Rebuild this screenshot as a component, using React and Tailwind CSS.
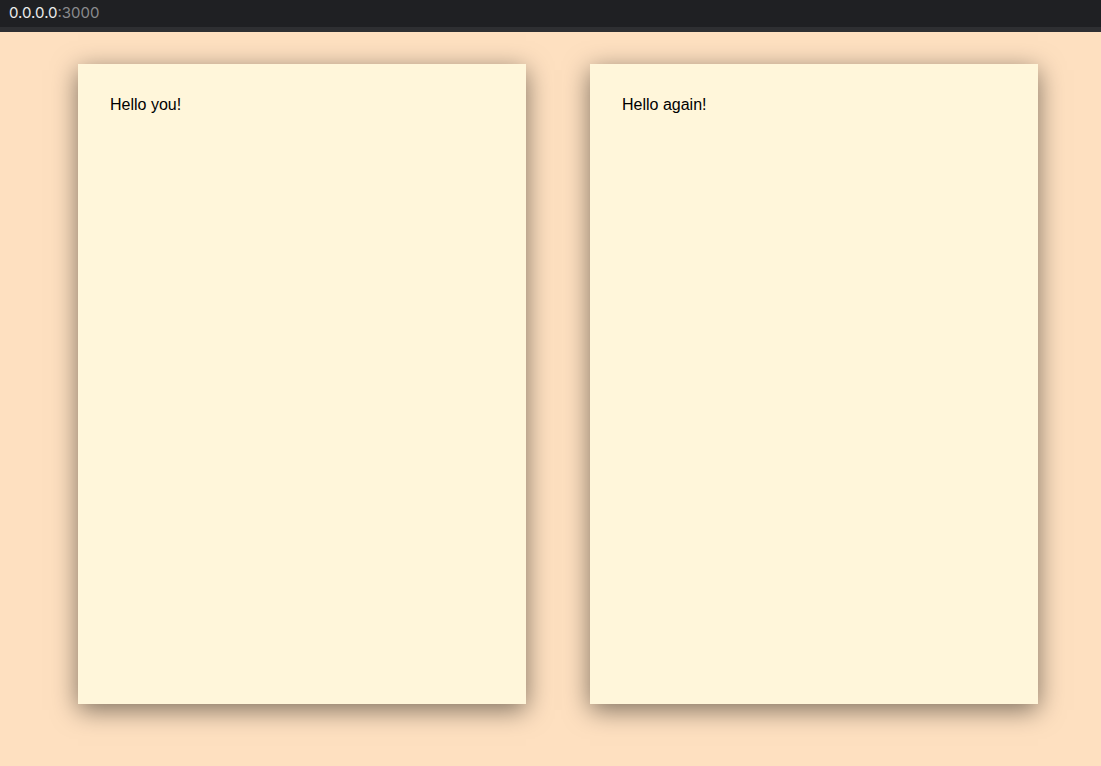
const cards = ["Hello you!", "Hello again!"];

const App = () => {
  return (
    <div className="min-h-screen bg-[#fee0c0] font-['Liberation_Sans',Arial,sans-serif]">
      <div className="h-[27px] bg-[#1f2023] flex items-center px-[9px] text-[15px] font-['Inter',sans-serif]">
        <span className="text-[#ececec]">0.0.0.0</span>
        <span className="text-[#8a8b8e]">:3000</span>
      </div>
      <div className="h-[5px] bg-[#2e2f32]" />
      <main className="flex gap-16 pl-[78px] pt-8 pb-16">
        {cards.map((text) => (
          <section
            key={text}
            className="w-[448px] h-[640px] bg-[#fff6da] p-8 shadow-[0_6px_24px_rgba(0,0,0,0.5)]"
          >
            <p className="text-base leading-[17px] text-black">{text}</p>
          </section>
        ))}
      </main>
    </div>
  );
};

export default App;
